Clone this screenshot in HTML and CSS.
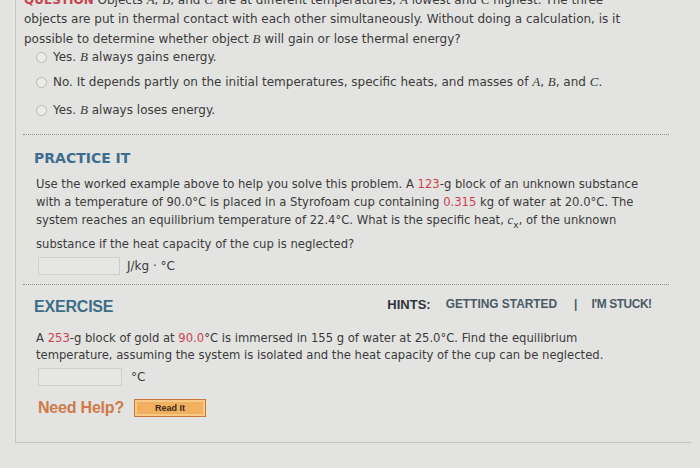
FILE: index.html
```html
<!DOCTYPE html>
<html>
<head>
<meta charset="utf-8">
<link rel="stylesheet" href="styles.css">
</head>
<body>
<div class="frame">
  <div class="question">
    <p class="qtext"><span class="qlabel">QUESTION</span> Objects <i class="var">A</i>, <i class="var">B</i>, and <i class="var">C</i> are at different temperatures, <i class="var">A</i> lowest and <i class="var">C</i> highest. The three objects are put in thermal contact with each other simultaneously. Without doing a calculation, is it possible to determine whether object <i class="var">B</i> will gain or lose thermal energy?</p>
    <div class="opt opt1"><span class="radio"></span><span class="otext">Yes. <i class="var">B</i> always gains energy.</span></div>
    <div class="opt opt2"><span class="radio"></span><span class="otext">No. It depends partly on the initial temperatures, specific heats, and masses of <i class="var">A</i>, <i class="var">B</i>, and <i class="var">C</i>.</span></div>
    <div class="opt opt3"><span class="radio"></span><span class="otext">Yes. <i class="var">B</i> always loses energy.</span></div>
  </div>
  <div class="sep"></div>
  <div class="section practice">
    <h2 class="heading">PRACTICE IT</h2>
    <p class="para para1">Use the worked example above to help you solve this problem. A <span class="red">123</span>-g block of an unknown substance with a temperature of 90.0°C is placed in a Styrofoam cup containing <span class="red">0.315</span> kg of water at 20.0°C. The system reaches an equilibrium temperature of 22.4°C. What is the specific heat, <i class="var">c</i><sub class="sub">x</sub>, of the unknown substance if the heat capacity of the cup is neglected?</p>
    <div class="answer"><span class="box box1"></span><span class="unit">J/kg · °C</span></div>
  </div>
  <div class="sep sep2"></div>
  <div class="section exercise">
    <div class="exhead">
      <h2 class="heading">EXERCISE</h2>
      <div class="hints"><span class="hlabel">HINTS:</span><span class="hlink">GETTING STARTED</span><span class="bar">|</span><span class="hlink stuck">I'M STUCK!</span></div>
    </div>
    <p class="para para2">A <span class="red">253</span>-g block of gold at <span class="red">90.0</span>°C is immersed in 155 g of water at 25.0°C. Find the equilibrium temperature, assuming the system is isolated and the heat capacity of the cup can be neglected.</p>
    <div class="answer answer2"><span class="box box2"></span><span class="unit">°C</span></div>
    <div class="help"><span class="needhelp">Need Help?</span><span class="readit">Read It</span></div>
  </div>
</div>
</body>
</html>
```
FILE: styles.css
```css
html, body {
  margin: 0;
  padding: 0;
  background: #e3e3e1;
  width: 700px;
  height: 468px;
  overflow: hidden;
}
body {
  font-family: "DejaVu Sans", Verdana, sans-serif;
  color: #3b3b3b;
  font-size: 12px;
}
.frame {
  display: flow-root;
  margin-left: 15px;
  width: 676px;
  height: 443px;
  border-left: 1px solid #c6c6c4;
  border-bottom: 1px solid #c2c2c0;
  box-sizing: border-box;
}
.question {
  padding-left: 8px;
  margin-top: -10px;
  width: 620px;
}
.qtext {
  margin: 0;
  line-height: 19px;
}
.qlabel {
  color: #c9424f;
  font-weight: bold;
}
.var {
  font-family: "Liberation Serif", "Times New Roman", serif;
  font-style: italic;
  font-size: 13px;
}
.opt {
  display: flex;
  align-items: center;
  padding-left: 12px;
  height: 18px;
}
.opt1 { margin-top: -1px; }
.opt2 { margin-top: 7px; }
.opt3 { margin-top: 10px; }
.radio {
  width: 9px;
  height: 9px;
  border: 1px solid #b8b8b6;
  border-radius: 50%;
  background: #ececea;
  margin-right: 6px;
  flex: none;
}
.sep {
  margin: 15px 0 0 7px;
  width: 646px;
  border-top: 1px dotted #8f8f8f;
}
.section {
  padding-left: 18px;
}
.heading {
  margin: 0;
  font-size: 14px;
  font-weight: bold;
  color: #3d6e8e;
  font-family: "DejaVu Sans", Verdana, sans-serif;
}
.practice .heading {
  margin-top: 15px;
}
.para {
  margin: 10px 0 0 2px;
  line-height: 17.5px;
  font-size: 11.6px;
}
.para1 {
  width: 612px;
}
.sub {
  display: inline-block;
  font-size: 9px;
  line-height: 9px;
  vertical-align: -4px;
  padding-bottom: 6px;
}
.red {
  color: #d2404f;
}
.answer {
  display: flex;
  align-items: center;
  margin-top: 3px;
  margin-left: 4px;
}
.box {
  width: 82px;
  height: 18px;
  border: 1px solid #cfcfcd;
  background: #e6e6e4;
  box-sizing: border-box;
  margin-right: 7px;
}
.sep2 {
  margin-top: 9px;
}
.exhead {
  display: flex;
  align-items: center;
  margin-top: 13px;
  height: 18px;
}
.exercise .heading {
  color: #3e6d88;
  font-family: "Liberation Sans", Arial, sans-serif;
  font-size: 16px;
  letter-spacing: -0.2px;
}
.hints {
  margin-left: 274px;
  display: flex;
  align-items: center;
  font-family: "Liberation Sans", Arial, sans-serif;
  font-weight: bold;
  font-size: 11.9px;
  color: #4a5a66;
  margin-top: -5px;
}
.hlabel {
  color: #2f353a;
  font-size: 13px;
  margin-right: 15px;
}
.bar {
  margin: 0 14px 0 17px;
}
.stuck {
  letter-spacing: -0.4px;
}
.para2 {
  margin-top: 14px;
  width: 620px;
}
.answer2 {
  margin-top: 3px;
}
.box2 {
  width: 84px;
  margin-right: 9px;
}
.help {
  display: flex;
  align-items: center;
  margin-top: 13px;
  margin-left: 4px;
}
.needhelp {
  font-family: "Liberation Sans", Arial, sans-serif;
  font-weight: bold;
  font-size: 16px;
  color: #cf7a47;
  letter-spacing: -0.2px;
  margin-right: 10px;
}
.readit {
  display: inline-block;
  width: 72px;
  height: 18px;
  box-sizing: border-box;
  border: 1px solid #c8763a;
  background: #f0b060;
  box-shadow: inset 0 0 0 2px #f7c985;
  font-family: "Liberation Sans", Arial, sans-serif;
  font-weight: bold;
  font-size: 9px;
  color: #3a2a1a;
  text-align: center;
  line-height: 16px;
}
```
